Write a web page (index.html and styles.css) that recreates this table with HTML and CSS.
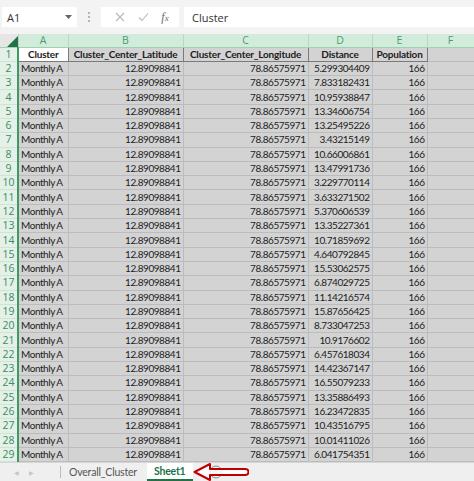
FILE: index.html
```html
<!DOCTYPE html>
<html>
<head>
<meta charset="utf-8">
<link rel="stylesheet" href="styles.css">
</head>
<body>
<div class="app">
  <div class="toolbar">
    <div class="namebox"><span>A1</span><svg class="dd" width="7" height="4" viewBox="0 0 7 4"><path d="M0 0h7L3.5 4z" fill="#666"/></svg></div>
    <div class="grip"><i></i><i></i><i></i></div>
    <div class="fxbtns">
      <svg width="10" height="10" viewBox="0 0 10 10"><path d="M1 1L9 9M9 1L1 9" stroke="#b8b8b8" stroke-width="1.1" fill="none"/></svg>
      <svg width="11" height="10" viewBox="0 0 11 10"><path d="M1 5.5L4 8.5L10 1.5" stroke="#b8b8b8" stroke-width="1.1" fill="none"/></svg>
      <span class="fx">f<span>x</span></span>
    </div>
    <div class="formula">Cluster</div>
  </div>
  <div class="sheet">
    <table class="grid">
      <colgroup><col class="c0"><col class="ca"><col class="cb"><col class="cc"><col class="cd"><col class="ce"><col class="cf"></colgroup>
      <thead>
        <tr class="colhead"><th class="corner"><svg width="12" height="12" viewBox="0 0 12 12"><path d="M12 0V12H0z" fill="#217346"/></svg></th><th>A</th><th>B</th><th>C</th><th>D</th><th>E</th><th>F</th></tr>
      </thead>
      <tbody id="rows">
        <tr class="hdr"><th>1</th><td class="active">Cluster</td><td>Cluster_Center_Latitude</td><td>Cluster_Center_Longitude</td><td>Distance</td><td>Population</td><td class="blank"></td></tr>
        <tr><th>2</th><td>Monthly A</td><td class="n">12.89098841</td><td class="n">78.86575971</td><td class="n">5.299304409</td><td class="n">166</td><td class="blank"></td></tr>
        <tr><th>3</th><td>Monthly A</td><td class="n">12.89098841</td><td class="n">78.86575971</td><td class="n">7.833182431</td><td class="n">166</td><td class="blank"></td></tr>
        <tr><th>4</th><td>Monthly A</td><td class="n">12.89098841</td><td class="n">78.86575971</td><td class="n">10.95938847</td><td class="n">166</td><td class="blank"></td></tr>
        <tr><th>5</th><td>Monthly A</td><td class="n">12.89098841</td><td class="n">78.86575971</td><td class="n">13.34606754</td><td class="n">166</td><td class="blank"></td></tr>
        <tr><th>6</th><td>Monthly A</td><td class="n">12.89098841</td><td class="n">78.86575971</td><td class="n">13.25495226</td><td class="n">166</td><td class="blank"></td></tr>
        <tr><th>7</th><td>Monthly A</td><td class="n">12.89098841</td><td class="n">78.86575971</td><td class="n">3.43215149</td><td class="n">166</td><td class="blank"></td></tr>
        <tr><th>8</th><td>Monthly A</td><td class="n">12.89098841</td><td class="n">78.86575971</td><td class="n">10.66006861</td><td class="n">166</td><td class="blank"></td></tr>
        <tr><th>9</th><td>Monthly A</td><td class="n">12.89098841</td><td class="n">78.86575971</td><td class="n">13.47991736</td><td class="n">166</td><td class="blank"></td></tr>
        <tr><th>10</th><td>Monthly A</td><td class="n">12.89098841</td><td class="n">78.86575971</td><td class="n">3.229770114</td><td class="n">166</td><td class="blank"></td></tr>
        <tr><th>11</th><td>Monthly A</td><td class="n">12.89098841</td><td class="n">78.86575971</td><td class="n">3.633271502</td><td class="n">166</td><td class="blank"></td></tr>
        <tr><th>12</th><td>Monthly A</td><td class="n">12.89098841</td><td class="n">78.86575971</td><td class="n">5.370606539</td><td class="n">166</td><td class="blank"></td></tr>
        <tr><th>13</th><td>Monthly A</td><td class="n">12.89098841</td><td class="n">78.86575971</td><td class="n">13.35227361</td><td class="n">166</td><td class="blank"></td></tr>
        <tr><th>14</th><td>Monthly A</td><td class="n">12.89098841</td><td class="n">78.86575971</td><td class="n">10.71859692</td><td class="n">166</td><td class="blank"></td></tr>
        <tr><th>15</th><td>Monthly A</td><td class="n">12.89098841</td><td class="n">78.86575971</td><td class="n">4.640792845</td><td class="n">166</td><td class="blank"></td></tr>
        <tr><th>16</th><td>Monthly A</td><td class="n">12.89098841</td><td class="n">78.86575971</td><td class="n">15.53062575</td><td class="n">166</td><td class="blank"></td></tr>
        <tr><th>17</th><td>Monthly A</td><td class="n">12.89098841</td><td class="n">78.86575971</td><td class="n">6.874029725</td><td class="n">166</td><td class="blank"></td></tr>
        <tr><th>18</th><td>Monthly A</td><td class="n">12.89098841</td><td class="n">78.86575971</td><td class="n">11.14216574</td><td class="n">166</td><td class="blank"></td></tr>
        <tr><th>19</th><td>Monthly A</td><td class="n">12.89098841</td><td class="n">78.86575971</td><td class="n">15.87656425</td><td class="n">166</td><td class="blank"></td></tr>
        <tr><th>20</th><td>Monthly A</td><td class="n">12.89098841</td><td class="n">78.86575971</td><td class="n">8.733047253</td><td class="n">166</td><td class="blank"></td></tr>
        <tr><th>21</th><td>Monthly A</td><td class="n">12.89098841</td><td class="n">78.86575971</td><td class="n">10.9176602</td><td class="n">166</td><td class="blank"></td></tr>
        <tr><th>22</th><td>Monthly A</td><td class="n">12.89098841</td><td class="n">78.86575971</td><td class="n">6.457618034</td><td class="n">166</td><td class="blank"></td></tr>
        <tr><th>23</th><td>Monthly A</td><td class="n">12.89098841</td><td class="n">78.86575971</td><td class="n">14.42367147</td><td class="n">166</td><td class="blank"></td></tr>
        <tr><th>24</th><td>Monthly A</td><td class="n">12.89098841</td><td class="n">78.86575971</td><td class="n">16.55079233</td><td class="n">166</td><td class="blank"></td></tr>
        <tr><th>25</th><td>Monthly A</td><td class="n">12.89098841</td><td class="n">78.86575971</td><td class="n">13.35886493</td><td class="n">166</td><td class="blank"></td></tr>
        <tr><th>26</th><td>Monthly A</td><td class="n">12.89098841</td><td class="n">78.86575971</td><td class="n">16.23472835</td><td class="n">166</td><td class="blank"></td></tr>
        <tr><th>27</th><td>Monthly A</td><td class="n">12.89098841</td><td class="n">78.86575971</td><td class="n">10.43516795</td><td class="n">166</td><td class="blank"></td></tr>
        <tr><th>28</th><td>Monthly A</td><td class="n">12.89098841</td><td class="n">78.86575971</td><td class="n">10.01411026</td><td class="n">166</td><td class="blank"></td></tr>
        <tr><th>29</th><td>Monthly A</td><td class="n">12.89098841</td><td class="n">78.86575971</td><td class="n">6.041754351</td><td class="n">166</td><td class="blank"></td></tr>
      </tbody>
    </table>
  </div>
  <div class="tabbar">
    <div class="navs"><span>&#9664;</span><span>&#9654;</span></div>
    <div class="tabsep"></div>
    <div class="tab">Overall_Cluster</div>
    <div class="tab active">Sheet1</div>
    <div class="addwrap">
      <svg class="plus" width="14" height="14" viewBox="0 0 14 14"><circle cx="7" cy="7" r="6" fill="none" stroke="#8a8a8a" stroke-width="1"/><path d="M7 3.5v7M3.5 7h7" stroke="#8a8a8a" stroke-width="1"/></svg>
      <svg class="arrow" width="56" height="20" viewBox="0 0 56 20"><path d="M1.5 10L17 2V7H52.5A3 3 0 0 1 52.5 13H17V18Z" fill="rgba(255,255,255,0.85)" stroke="#c00000" stroke-width="2" stroke-linejoin="round"/></svg>
    </div>
  </div>
</div>
</body>
</html>
```

FILE: styles.css
```css
* { box-sizing: border-box; }
html, body { margin: 0; padding: 0; }
body { width: 474px; height: 481px; overflow: hidden; background: #fff; font-family: "Lato", "Open Sans", sans-serif; }
.app { display: flex; flex-direction: column; height: 481px; }

.toolbar { height: 34px; background: #f3f3f3; display: flex; align-items: center; padding: 0 0 0 2px; }
.namebox { width: 75px; height: 20px; background: #fff; display: flex; align-items: center; justify-content: space-between; padding: 0 5px 0 5px; font-family: "Open Sans", sans-serif; font-size: 11px; color: #333; }
.grip { width: 24px; display: flex; flex-direction: column; align-items: center; gap: 2px; margin-left: 0; }
.grip i { width: 2px; height: 2px; background: #b5b5b5; display: block; }
.fxbtns { width: 78px; height: 20px; background: #fff; display: flex; align-items: center; justify-content: space-around; padding: 0 4px 0 8px; }
.fx { font-family: "Liberation Serif", serif; font-style: italic; font-size: 12px; color: #6a6a6a; }
.fx span { font-size: 9px; }
.formula { flex: 1; height: 20px; margin-left: 5px; background: #fff; font-family: "Open Sans", sans-serif; font-size: 11px; color: #333; display: flex; align-items: center; padding-left: 8px; }

.sheet { flex: 1; background: #d3d3d3; overflow: hidden; }
.grid { border-collapse: collapse; table-layout: fixed; width: 474px; }
.c0 { width: 18px; } .ca { width: 50px; } .cb { width: 115px; } .cc { width: 125px; } .cd { width: 64px; } .ce { width: 55px; } .cf { width: 47px; }

.colhead th { height: 13px; background: #d2ecdc; color: #4f9a6e; font-weight: normal; font-family: "Open Sans", sans-serif; font-size: 10.5px; line-height: 12px; padding: 0; border-right: 1px solid #b7d8c3; border-bottom: 1px solid #9fd1b2; }
.colhead th.corner { background: #e6e6e6; text-align: right; vertical-align: bottom; border-right: 1px solid #c8c8c8; }
.corner svg { display: block; margin-left: auto; width: 11px; height: 11px; }

tbody tr { height: 14.3px; }
tbody th { background: #e3f1e8; color: #3f8a5e; font-weight: normal; font-family: "Open Sans", sans-serif; font-size: 10.5px; text-align: center; padding: 0; border-right: 2px solid #3e9a62; border-bottom: 1px solid #cfe3d6; line-height: 13px; }
tbody td { font-size: 10px; letter-spacing: -0.45px; color: #1c1c1c; padding: 0 2px; line-height: 13px; white-space: nowrap; overflow: hidden; border-right: 1px solid #bcbcbc; border-bottom: 1px solid #bcbcbc; background: #d3d3d3; }
td.n { text-align: right; }
td.blank { border-right: none; }
tr.hdr td { font-weight: bold; text-align: center; border: 1px solid #7a7a7a; letter-spacing: -0.2px; padding: 0; }
tr.hdr td.blank { border: none; border-left: 1px solid #7a7a7a; border-bottom: 1px solid #bcbcbc; }
td.active { background: #fff; }

.tabbar { height: 19px; background: #efefef; border-top: 1px solid #d6d6d6; display: flex; align-items: stretch; position: relative; font-family: "Lato", sans-serif; }
.navs { width: 56px; display: flex; align-items: center; gap: 10px; padding-left: 14px; font-size: 6px; color: #c4c4c4; }
.tabsep { width: 1px; background: #bdbdbd; margin: 3px 0 3px 4px; }
.tab { padding: 0 8px; font-size: 10.5px; letter-spacing: -0.2px; color: #555; display: flex; align-items: center; }
.tab.active { background: #fff; color: #217346; font-weight: bold; border-bottom: 2px solid #217346; margin-left: 2px; padding: 0 7px; }
.addwrap { position: relative; width: 60px; }
.plus { position: absolute; left: 16px; top: 2px; }
.arrow { position: absolute; left: 0; top: -1px; }
```
